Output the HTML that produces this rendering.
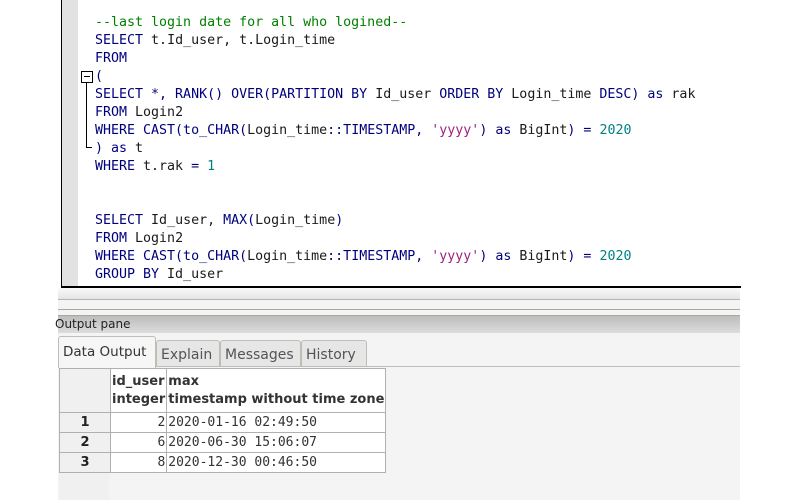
<!DOCTYPE html>
<html><head><style>
body{margin:0;width:800px;height:500px;background:#fff;position:relative;overflow:hidden;font-family:"DejaVu Sans",sans-serif}
.ed{position:absolute;left:61px;top:0;width:679px;height:286px;border-left:1px solid #000;border-bottom:2px solid #000;background:#fff}
.gut{position:absolute;left:0;top:0;width:16px;height:286px;background:#e2e2e2}
.code{position:absolute;left:33px;top:14px;font-family:"DejaVu Sans Mono",monospace;font-size:13.3px;line-height:18px;color:#1a1a1a;white-space:pre}
.k{color:#00007f}.c{color:#008000}.n{color:#008080}.s{color:#a0207f}
.fold{position:absolute;left:19px;top:71px;width:10px;height:10px;border:1px solid #000;background:#fff}
.fold:after{content:"";position:absolute;left:2px;top:4px;width:6px;height:1px;background:#000}
.fl{position:absolute;left:24px;top:83px;width:1px;height:64px;background:#000}
.fl2{position:absolute;left:24px;top:147px;width:6px;height:1px;background:#000}
.sb{position:absolute;left:58px;top:288px;width:682px;height:11px;background:linear-gradient(#fafafa,#e4e4e4);border-bottom:1px solid #b8b4ae}
.panel{position:absolute;left:58px;top:300px;width:682px;height:200px;background:#f4f4f4}
.ln{position:absolute;left:58px;width:682px;height:1px;background:#aaa6a0}
.op{position:absolute;left:58px;top:316px;width:682px;height:17px;background:linear-gradient(#bdbdbd,#dcdcdc);font-size:12px;line-height:17px;color:#222;text-indent:-3px}
.tab{position:absolute;top:340px;height:26px;border:1px solid #c0bcb6;border-bottom:none;border-radius:3px 3px 0 0;background:#e6e6e6;font-size:14px;color:#555;line-height:28px;padding:0 4px;box-sizing:border-box;white-space:nowrap;overflow:hidden}
table{position:absolute;left:59px;top:368px;border-collapse:collapse;font-size:13px;background:#fff}
td{border:1px solid #b0b0b0;padding:0 1px;height:19px}
.rh{background:#f0f0f0;font-weight:bold;text-align:center;width:48px;color:#222}
.hd{font-weight:bold;color:#333;line-height:18px;padding:4px 1px 3px;vertical-align:top}
.m{font-family:"DejaVu Sans Mono",monospace;font-size:13px;color:#333}
</style></head><body>
<div class="ed"><div class="gut"></div>
<div class="fold"></div><div class="fl"></div><div class="fl2"></div>
<div class="code"><span class="c">--last login date for all who logined--</span>
<span class="k">SELECT</span> t.Id_user, t.Login_time
<span class="k">FROM</span>
<span class="k">(</span>
<span class="k">SELECT *, RANK() OVER(PARTITION BY</span> Id_user <span class="k">ORDER BY</span> Login_time <span class="k">DESC) as</span> rak
<span class="k">FROM</span> Login2
<span class="k">WHERE CAST(to_CHAR(</span>Login_time<span class="k">::TIMESTAMP,</span> <span class="s">'yyyy'</span><span class="k">) as</span> BigInt<span class="k">) =</span> <span class="n">2020</span>
<span class="k">) as</span> t
<span class="k">WHERE</span> t.rak <span class="k">=</span> <span class="n">1</span>


<span class="k">SELECT</span> Id_user, <span class="k">MAX(</span>Login_time<span class="k">)</span>
<span class="k">FROM</span> Login2
<span class="k">WHERE CAST(to_CHAR(</span>Login_time<span class="k">::TIMESTAMP,</span> <span class="s">'yyyy'</span><span class="k">) as</span> BigInt<span class="k">) =</span> <span class="n">2020</span>
<span class="k">GROUP BY</span> Id_user</div>
</div>
<div class="sb"></div>
<div class="panel"></div>
<div class="ln" style="top:309px"></div>
<div class="ln" style="top:315px"></div>
<div class="op">Output pane</div>
<div class="tab" style="left:58px;top:336px;height:32px;background:#f6f6f6;width:98px;color:#333;line-height:30px;font-size:13.5px">Data Output</div>
<div class="tab" style="left:156px;width:64px">Explain</div>
<div class="tab" style="left:220px;width:81px">Messages</div>
<div class="tab" style="left:301px;width:66px">History</div>
<div class="ln" style="top:366px;left:156px;width:584px;background:#c0bcb6"></div>
<div style="position:absolute;left:59px;top:473px;width:50px;height:27px;background:#f0f0f0"></div>
<table>
<tr><td class="rh" style="height:40px"></td><td class="hd">id_user<br>integer</td><td class="hd">max<br>timestamp without time zone</td></tr>
<tr><td class="rh">1</td><td class="m" style="text-align:right">2</td><td class="m">2020-01-16 02:49:50</td></tr>
<tr><td class="rh">2</td><td class="m" style="text-align:right">6</td><td class="m">2020-06-30 15:06:07</td></tr>
<tr><td class="rh">3</td><td class="m" style="text-align:right">8</td><td class="m">2020-12-30 00:46:50</td></tr>
</table>
</body></html>
